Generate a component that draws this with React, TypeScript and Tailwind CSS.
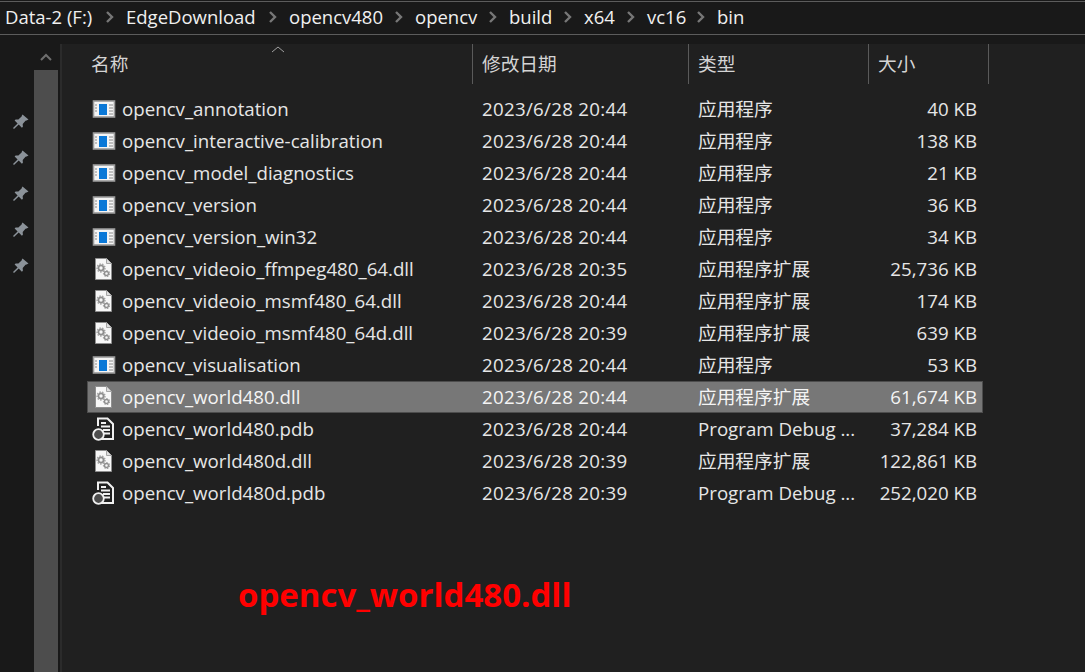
const crumbs = [
  { label: "Data-2 (F:)", width: "w-[89px]" },
  { label: "EdgeDownload", width: "w-[131px]" },
  { label: "opencv480", width: "w-[94px]" },
  { label: "opencv", width: "w-[62px]" },
  { label: "build", width: "w-[43px]" },
  { label: "x64", width: "w-[31px]" },
  { label: "vc16", width: "w-[38px]" },
  { label: "bin", width: "w-[28px]" },
];

type Kind = "exe" | "dll" | "pdb";

const APP = "应用程序";
const EXT = "应用程序扩展";
const PDB = "Program Debug ...";

const files: { name: string; date: string; type: string; size: string; kind: Kind; selected?: boolean }[] = [
  { name: "opencv_annotation", date: "2023/6/28 20:44", type: APP, size: "40 KB", kind: "exe" },
  { name: "opencv_interactive-calibration", date: "2023/6/28 20:44", type: APP, size: "138 KB", kind: "exe" },
  { name: "opencv_model_diagnostics", date: "2023/6/28 20:44", type: APP, size: "21 KB", kind: "exe" },
  { name: "opencv_version", date: "2023/6/28 20:44", type: APP, size: "36 KB", kind: "exe" },
  { name: "opencv_version_win32", date: "2023/6/28 20:44", type: APP, size: "34 KB", kind: "exe" },
  { name: "opencv_videoio_ffmpeg480_64.dll", date: "2023/6/28 20:35", type: EXT, size: "25,736 KB", kind: "dll" },
  { name: "opencv_videoio_msmf480_64.dll", date: "2023/6/28 20:44", type: EXT, size: "174 KB", kind: "dll" },
  { name: "opencv_videoio_msmf480_64d.dll", date: "2023/6/28 20:39", type: EXT, size: "639 KB", kind: "dll" },
  { name: "opencv_visualisation", date: "2023/6/28 20:44", type: APP, size: "53 KB", kind: "exe" },
  { name: "opencv_world480.dll", date: "2023/6/28 20:44", type: EXT, size: "61,674 KB", kind: "dll", selected: true },
  { name: "opencv_world480.pdb", date: "2023/6/28 20:44", type: PDB, size: "37,284 KB", kind: "pdb" },
  { name: "opencv_world480d.dll", date: "2023/6/28 20:39", type: EXT, size: "122,861 KB", kind: "dll" },
  { name: "opencv_world480d.pdb", date: "2023/6/28 20:39", type: PDB, size: "252,020 KB", kind: "pdb" },
];

function ExeIcon() {
  return (
    <svg width="24" height="18" viewBox="0 0 24 18" className="shrink-0">
      <rect x="1.500" y="1" width="21" height="16" fill="#f4f4f4" stroke="#9a9a9a" strokeWidth="1.6" />
      <rect x="7" y="4" width="8" height="11" fill="#0a78d7" />
      <path d="M3 5h2M3 8h2M3 11h2M17 5h4M17 8h4M17 11h4M17 14h4" stroke="#8a8a8a" strokeWidth="1" />
    </svg>
  );
}

function Gear({ cx, cy, r }: { cx: number; cy: number; r: number }) {
  return (
    <g>
      <circle cx={cx} cy={cy} r={r} fill="none" stroke="#8e8e8e" strokeWidth={r * 0.7} />
      <circle cx={cx} cy={cy} r={r * 1.5} fill="none" stroke="#a4a4a4" strokeWidth={r * 0.6} strokeDasharray="1.5 1.2" />
    </g>
  );
}

function DllIcon() {
  return (
    <svg width="24" height="22" viewBox="0 0 24 22" className="shrink-0">
      <path d="M3.500 0.500h11l5 5v16h-16z" fill="#f7f7f7" stroke="#8f8f8f" />
      <path d="M14.500 0.500v5h5" fill="#dedede" stroke="#a5a5a5" />
      <Gear cx={9} cy={10} r={2.6} />
      <Gear cx={14.500} cy={15.500} r={2} />
    </svg>
  );
}

function PdbIcon() {
  return (
    <svg width="24" height="24" viewBox="0 0 24 24" className="shrink-0">
      <path d="M6 9V1.500h9.500l5.500 5.500v15h-12" fill="#202020" stroke="#f0f0f0" strokeWidth="2" />
      <path d="M9 6h5M9 9.500h9M11 13h7M12 16.500h6" stroke="#f0f0f0" strokeWidth="1.800" />
      <circle cx="6.500" cy="17.500" r="5.300" fill="#4d4d4d" stroke="#f0f0f0" strokeWidth="1.800" />
    </svg>
  );
}

function FileIcon({ kind }: { kind: Kind }) {
  if (kind === "exe") return <ExeIcon />;
  if (kind === "dll") return <DllIcon />;
  return <PdbIcon />;
}

function Pin() {
  return (
    <svg width="16" height="16" viewBox="0 0 16 16">
      <path d="M9.500 0.500l6 5-2 1-1 .2-2.800 3.200.2 2.800-1 1-3.200-3.200-4.700 4.500-1-.9 4.600-4.700-3-3 1-1 2.800.2 3.200-3 .3-1.100z" fill="#8b9299" />
    </svg>
  );
}

function Chevron() {
  return (
    <svg width="10" height="14" viewBox="0 0 10 14" className="mx-[11px] shrink-0">
      <path d="M2 2l5 5-5 5" fill="none" stroke="#777777" strokeWidth="2.400" />
    </svg>
  );
}

export default function App() {
  return (
    <div className="flex h-[672px] w-[1085px] flex-col overflow-hidden bg-[#191919] text-[18.7px] text-[#f0f0f0] font-['Open_Sans','Noto_Sans_CJK_SC',sans-serif]">
      <div className="mt-px flex h-[34px] shrink-0 items-center border-y border-y-[#5c5c5c] pl-[5px] pb-0.5 text-[18.500px]">
        {crumbs.map((c, i) => (
          <div key={c.label} className="flex items-center">
            {i > 0 && <Chevron />}
            <span className={`${c.width} whitespace-nowrap`}>{c.label}</span>
          </div>
        ))}
      </div>

      <div className="mt-[9px] flex min-h-0 flex-1">
        <div className="flex w-[62px] shrink-0 border-r-2 border-r-[#2b2b2b] bg-[#191919]">
          <div className="flex w-[34px] flex-col items-center gap-5 pt-[70px] pl-2">
            <Pin />
            <Pin />
            <Pin />
            <Pin />
            <Pin />
          </div>
          <div className="flex w-6 flex-col items-center">
            <div className="flex h-[26px] items-center justify-center">
              <svg width="12" height="8" viewBox="0 0 12 8">
                <path d="M1 7l5-5 5 5" fill="none" stroke="#6e6e6e" strokeWidth="2" />
              </svg>
            </div>
            <div className="w-full flex-1 bg-[#4d4d4d]" />
          </div>
        </div>

        <div className="flex min-w-0 flex-1 flex-col bg-[#202020]">
          <div className="relative flex h-10 shrink-0 items-center text-[#d4d4d4]">
            <svg width="14" height="7" viewBox="0 0 14 7" className="absolute left-[209px] top-0.5">
              <path d="M1 6l6-5 6 5" fill="none" stroke="#a0a0a0" />
            </svg>
            <div className="flex h-full w-[411px] items-center border-r border-r-[#5a5a5a] pl-[29px]">名称</div>
            <div className="flex h-full w-[216px] items-center border-r border-r-[#5a5a5a] pl-[9px]">修改日期</div>
            <div className="flex h-full w-[180px] items-center border-r border-r-[#5a5a5a] pl-[9px]">类型</div>
            <div className="flex h-full w-[120px] items-center border-r border-r-[#5a5a5a] pl-[9px]">大小</div>
          </div>

          <div className="ml-[25px] mt-[9px] w-[896px]">
            {files.map((f) => (
              <div
                key={f.name}
                className={
                  f.selected
                    ? "flex h-8 items-center border border-[#4d4d4d] bg-[#777777] text-[#f4f4f4]"
                    : "flex h-8 items-center border border-transparent text-[#e6e6e6]"
                }
              >
                <div className="flex w-[394px] shrink-0 items-center gap-[6px] pl-[4px]">
                  <FileIcon kind={f.kind} />
                  <span className="whitespace-nowrap">{f.name}</span>
                </div>
                <div className="w-[216px] shrink-0 whitespace-nowrap tracking-[0.3px]">{f.date}</div>
                <div className="w-[170px] shrink-0 whitespace-nowrap">{f.type}</div>
                <div className="w-[109px] shrink-0 whitespace-nowrap text-right">{f.size}</div>
              </div>
            ))}
          </div>

          <div className="ml-[176px] mt-[66px] text-[33px] leading-10 font-bold text-[#ff0000]">opencv_world480.dll</div>
        </div>
      </div>
    </div>
  );
}
